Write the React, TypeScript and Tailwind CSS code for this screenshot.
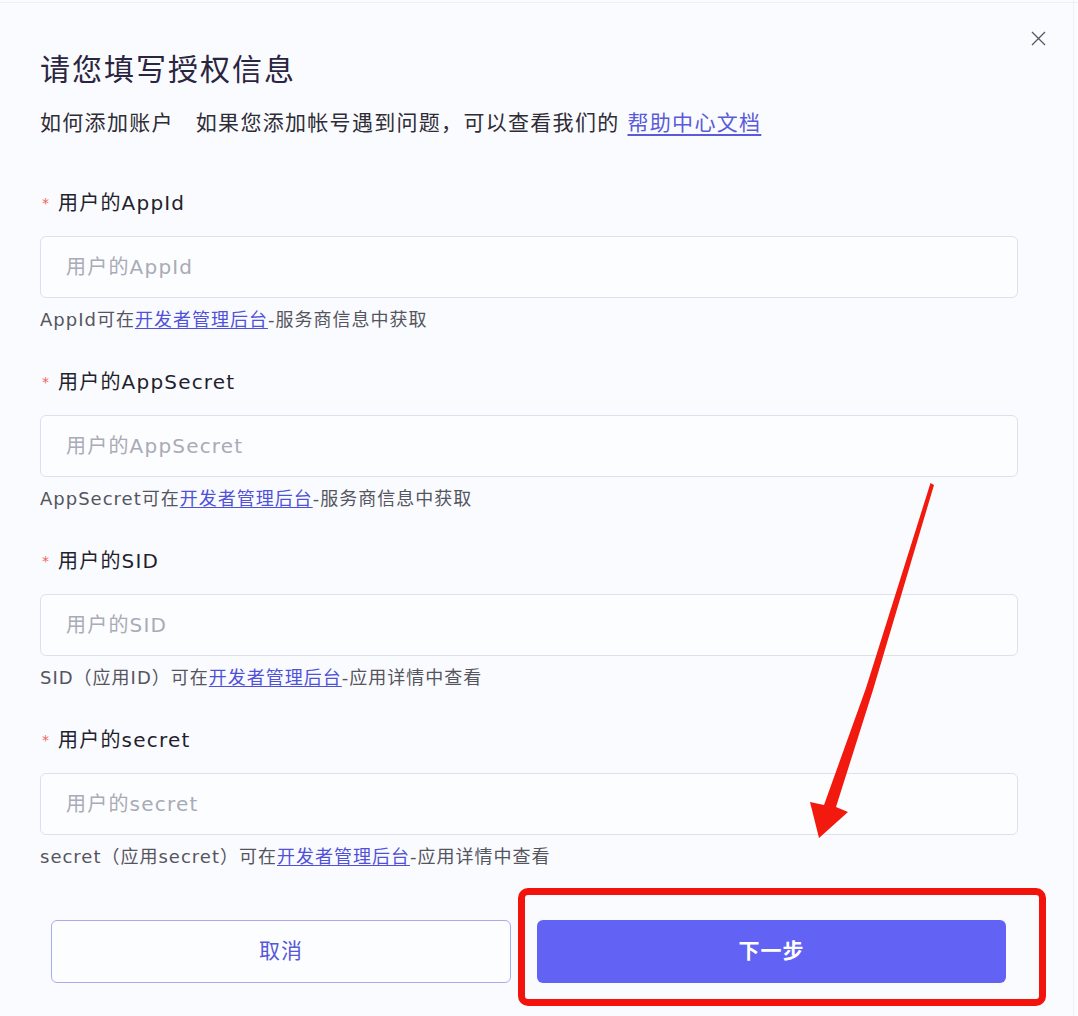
import React from "react";

type Field = {
  label: string;
  placeholder: string;
  prefix: string;
  suffix: string;
};

const fields: Field[] = [
  { label: "用户的AppId", placeholder: "用户的AppId", prefix: "AppId可在", suffix: "-服务商信息中获取" },
  { label: "用户的AppSecret", placeholder: "用户的AppSecret", prefix: "AppSecret可在", suffix: "-服务商信息中获取" },
  { label: "用户的SID", placeholder: "用户的SID", prefix: "SID（应用ID）可在", suffix: "-应用详情中查看" },
  { label: "用户的secret", placeholder: "用户的secret", prefix: "secret（应用secret）可在", suffix: "-应用详情中查看" },
];

function FormField({ field }: { field: Field }) {
  return (
    <div className="flex flex-col">
      <label className="flex items-center h-[28px] text-[20px] leading-[28px] tracking-[1.2px] text-[#231f2e]">
        <span className="w-[18px] pl-[2px] text-[#f0645c] text-[14px]">*</span>
        {field.label}
      </label>
      <input
        className="mt-[19px] h-[62px] w-full rounded-[6px] border border-[#dde1ee] bg-[#fcfdff] px-[25px] text-[20px] tracking-[1.2px] text-[#333] placeholder:text-[#a9abb6] outline-none"
        placeholder={field.placeholder}
      />
      <p className="mt-[10px] h-[24px] text-[18px] leading-[24px] tracking-[1px] text-[#555560]">
        {field.prefix}
        <a className="text-[#4f52d9] underline underline-offset-2">开发者管理后台</a>
        {field.suffix}
      </p>
    </div>
  );
}

export default function App() {
  return (
    <div
      className="relative w-[1078px] h-[1016px] bg-[#fafbfe] overflow-hidden"
      style={{ fontFamily: '"DejaVu Sans", "Noto Sans CJK SC", sans-serif' }}
    >
      <div className="absolute inset-y-0 right-[4px] w-px bg-[#eef0f5]" />
      <div className="absolute inset-x-0 top-[2px] h-px bg-[#eef0f5]" />

      {/* close */}
      <button className="absolute left-[1031px] top-[31px] w-[15px] h-[15px] text-[#5a5566]">
        <svg viewBox="0 0 15 15" className="w-full h-full" fill="none" stroke="currentColor" strokeWidth="1.3">
          <path d="M1 1L14 14M14 1L1 14" />
        </svg>
      </button>

      <div className="flex flex-col pl-[40px] pr-[60px] pt-[50px]">
        <h1 className="h-[40px] text-[30px] leading-[40px] tracking-[2px] font-normal text-[#2a2540]">请您填写授权信息</h1>
        <p className="mt-[19px] h-[28px] text-[21px] leading-[28px] tracking-[1.3px] text-[#2e2c36]">
          如何添加账户<span className="inline-block w-[22px]" />如果您添加帐号遇到问题，可以查看我们的{" "}
          <a className="text-[#5a5bd8] underline underline-offset-4">帮助中心文档</a>
        </p>

        <div className="mt-[52px] flex flex-col gap-[36px]">
          {fields.map((f) => (
            <FormField key={f.label} field={f} />
          ))}
        </div>

        <div className="mt-[51px] flex gap-[26px] pl-[11px]">
          <button className="h-[63px] w-[460px] rounded-[6px] border border-[#a9abef] bg-[#fcfdff] text-[21px] tracking-[1px] text-[#5758d6]">
            取消
          </button>
          <button className="h-[63px] w-[469px] rounded-[6px] bg-[#6262f5] text-[21px] tracking-[1px] font-bold text-white">
            下一步
          </button>
        </div>
      </div>

      {/* annotation box around the next button */}
      <div className="absolute left-[518px] top-[888px] w-[528px] h-[118px] rounded-[10px] border-[7px] border-[#f2130c] pointer-events-none" />

      {/* annotation arrow */}
      <svg className="absolute inset-0 pointer-events-none" width="1078" height="1016" viewBox="0 0 1078 1016">
        <polygon
          points="930.5,483 934,485 873,690 836,807 848,812 819,838 810,802 824,805 866,688"
          fill="#f2190f"
        />
      </svg>
    </div>
  );
}
